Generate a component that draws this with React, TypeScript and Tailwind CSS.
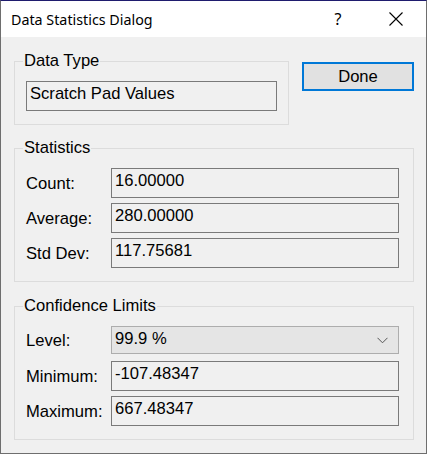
import React from 'react';

const font = { fontFamily: '"Liberation Sans", Arial, sans-serif' };

const Field: React.FC<{ value: string }> = ({ value }) => (
  <div className="h-[30px] border border-[#7a7a7a] bg-[#f0f0f0] pl-[3px] pt-[3px] text-[16.6px] leading-[18px] text-black">
    {value}
  </div>
);

const Row: React.FC<{ label: string; children: React.ReactNode; className?: string }> = ({ label, children, className }) => (
  <div className={`grid grid-cols-[85px_1fr] items-center ${className ?? ''}`}>
    <span className="text-[16.6px] leading-[18px] pt-[2px] text-black">{label}</span>
    {children}
  </div>
);

const Group: React.FC<{ title: string; className?: string; children: React.ReactNode }> = ({ title, className, children }) => (
  <fieldset className={`border border-[#dcdcdc] pl-[11px] pb-[13px] ${className ?? ''}`}>
    <legend className="ml-[-3px] px-[1px] text-[16.6px] leading-[18px] text-black">{title}</legend>
    {children}
  </fieldset>
);

export default function App() {
  return (
    <div
      className="w-[427px] h-[454px] bg-[#f0f0f0] border border-[#6e6e6e] border-t-[#1f1c6e] flex flex-col"
      style={font}
    >
      {/* title bar */}
      <div className="h-[36px] bg-white flex items-center shrink-0">
        <span
          className="pl-[10px] pt-[1px] text-[14.3px] text-black flex-1"
          style={{ fontFamily: '"Noto Sans", "Open Sans", sans-serif' }}
        >
          Data Statistics Dialog
        </span>
        <span
          className="w-[20px] text-center text-[16px] text-black mr-[40px]"
          style={{ fontFamily: '"Noto Sans", sans-serif' }}
        >
          ?
        </span>
        <svg width="16" height="16" viewBox="0 0 16 16" className="mr-[22px]">
          <path d="M1.5 1.5L14.5 14.5M14.5 1.5L1.5 14.5" stroke="#000" strokeWidth="1.1" fill="none" />
        </svg>
      </div>

      <div className="pl-[13px] pr-[12px] flex flex-col">
        <div className="flex mt-[15px] gap-[13px] items-start">
          <Group title="Data Type" className="w-[275px] pr-[11px]">
            <div className="mt-[11px]">
              <Field value="Scratch Pad Values" />
            </div>
          </Group>
          <button className="mt-[10px] w-[112px] h-[29px] border-2 border-[#0078d7] bg-[#e1e1e1] text-[16.6px] leading-[18px] text-black">
            Done
          </button>
        </div>

        <Group title="Statistics" className="mt-[14px] pr-[14px]">
          <div className="mt-[11px] flex flex-col gap-[5px]">
            <Row label="Count:"><Field value="16.00000" /></Row>
            <Row label="Average:"><Field value="280.00000" /></Row>
            <Row label="Std Dev:"><Field value="117.75681" /></Row>
          </div>
        </Group>

        <Group title="Confidence Limits" className="mt-[15px] pr-[14px]">
          <div className="mt-[11px] flex flex-col">
            <Row label="Level:">
              <div className="h-[28px] border border-[#adadad] bg-[#e5e5e5] flex items-center pl-[3px] pr-[10px] text-[16.6px] leading-[18px] text-black">
                <span className="flex-1 pb-[2px]">99.9 %</span>
                <svg width="11" height="7" viewBox="0 0 11 7">
                  <path d="M0.5 0.8L5.5 5.8L10.5 0.8" stroke="#555" strokeWidth="1" fill="none" />
                </svg>
              </div>
            </Row>
            <Row label="Minimum:" className="mt-[7px]"><Field value="-107.48347" /></Row>
            <Row label="Maximum:" className="mt-[5px]"><Field value="667.48347" /></Row>
          </div>
        </Group>
      </div>
    </div>
  );
}
